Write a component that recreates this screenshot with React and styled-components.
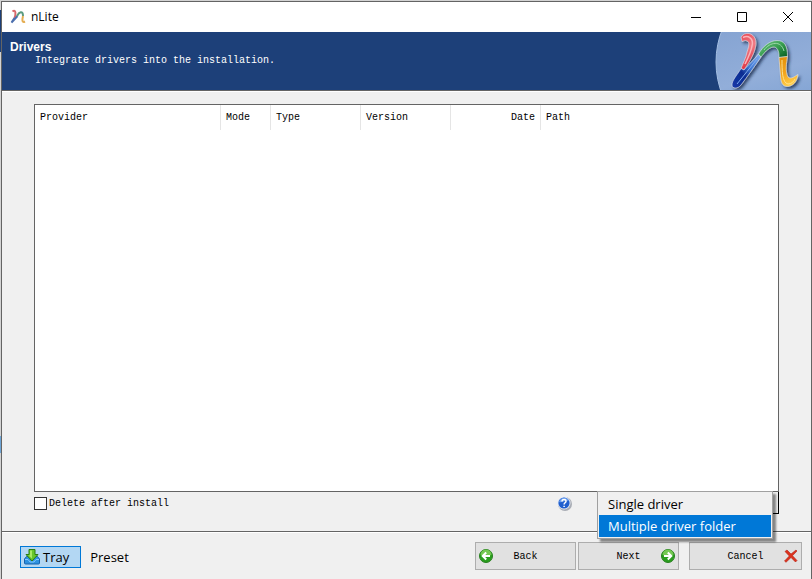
import React from 'react'
import styled, { createGlobalStyle } from 'styled-components'

const GlobalStyle = createGlobalStyle`
    * {
        box-sizing: border-box;
    }
    body {
        margin: 0;
        background: #d3d3d3;
    }
    button, input {
        margin: 0;
        font: inherit;
        color: inherit;
    }
`

const mono = '"Liberation Mono", monospace'
const sans = '"Open Sans", "Noto Sans", sans-serif'

const Desktop = styled.div`
    display: flex;
    min-height: 100vh;
    padding: 1px 0 0 1px;
    background: linear-gradient(#d3d3d3 10px, #1c3f78 10px 52px, #d3d3d3 52px 436px, #6ea5d6 436px 453px, #d3d3d3 453px);
`

const Window = styled.div`
    flex: 1;
    display: flex;
    flex-direction: column;
    min-width: 0;
    border: 1px solid #646464;
    border-bottom: 0;
    background: #f0f0f0;
    color: #000;
    font: 10px/14px ${mono};
`

const TitleBar = styled.header`
    display: flex;
    align-items: center;
    height: 30px;
    padding-left: 8px;
    background: #fff;
    font: 12px/16px ${sans};
`

const Title = styled.span`
    flex: 1;
    padding-left: 5px;
`

const CaptionButton = styled.button`
    display: grid;
    place-items: center;
    width: 46px;
    height: 30px;
    padding: 0;
    border: 0;
    background: none;
`

const Banner = styled.section`
    display: flex;
    justify-content: space-between;
    height: 59px;
    border-bottom: 1px solid #646464;
    background: #1d4079;
    color: #fff;
`

const BannerText = styled.div`
    padding: 8px;
`

const Heading = styled.h1`
    margin: 0;
    font: bold 12px/14px "Liberation Sans", sans-serif;
`

const Subheading = styled.p`
    margin: 0;
    padding-left: 25px;
`

const Main = styled.main`
    flex: 1;
    display: flex;
    flex-direction: column;
    padding: 12px 32px 17px;
    border-top: 1px solid #fff;
    border-bottom: 1px solid #646464;
`

const ListBox = styled.div`
    flex: 1;
    border: 1px solid #646464;
    background: #fff;
`

const Table = styled.table`
    width: 100%;
    border-spacing: 0;
    table-layout: fixed;
`

const Column = styled.th`
    width: ${p => p.$width ? `${p.$width}px` : 'auto'};
    height: 25px;
    padding: 0 5px;
    border-right: ${p => p.$width ? '1px solid #e5e5e5' : '0'};
    font-weight: normal;
    text-align: ${p => p.$align || 'left'};
`

const OptionsRow = styled.div`
    display: flex;
    align-items: center;
    height: 22px;
`

const CheckLabel = styled.label`
    display: flex;
    align-items: center;
    gap: 2px;
    margin-right: auto;
    line-height: 16px;
    span {
        padding-top: 2px;
    }
`

const Checkbox = styled.input`
    appearance: none;
    width: 13px;
    height: 13px;
    border: 1px solid #333;
    background: #fff;
    &:checked {
        background: #0078d7;
    }
`

const HelpButton = styled.button`
    display: flex;
    margin-right: 25px;
    padding: 0;
    border: 0;
    background: none;
`

const InsertWrap = styled.div`
    position: relative;
    align-self: flex-start;
    width: 182px;
`

const InsertButton = styled.button`
    display: block;
    width: 100%;
    height: 22px;
    border: 1px solid #000;
    border-top: 0;
    background: #f0f0f0;
`

const Menu = styled.div`
    position: absolute;
    top: -1px;
    left: 0;
    right: 6px;
    padding: 1px;
    border: 1px solid #a0a0a0;
    background: #f0f0f0;
    box-shadow: 3px 3px 2px rgba(0, 0, 0, 0.45);
    font: 13px/22px ${sans};
`

const MenuItem = styled.button`
    display: block;
    width: 100%;
    height: 22px;
    padding: 0 9px;
    border: 0;
    background: ${p => p.$active ? '#0078d7' : 'transparent'};
    color: ${p => p.$active ? '#fff' : '#000'};
    text-align: left;
    white-space: nowrap;
`

const Footer = styled.footer`
    display: flex;
    align-items: center;
    padding: 9px 9px 9px 18px;
    border-top: 1px solid #fff;
`

const ToolButton = styled.button`
    display: flex;
    align-items: center;
    gap: 3px;
    height: 22px;
    margin-top: 2px;
    padding: 0 ${p => p.$pressed ? '11px 0 3px' : '8px'};
    border: 1px solid ${p => p.$pressed ? '#0078d7' : 'transparent'};
    background: ${p => p.$pressed ? '#b3d7f3' : 'none'};
    font: 13px/20px ${sans};
`

const Nav = styled.nav`
    display: flex;
    gap: 2px;
    margin-left: auto;
`

const NavButton = styled.button`
    display: grid;
    grid-template-columns: 16px 1fr 16px;
    align-items: center;
    width: ${p => p.$wide ? '113px' : '101px'};
    height: 28px;
    margin-left: ${p => p.$wide ? '8px' : '0'};
    padding: 0 2px;
    border: 1px solid #adadad;
    background: #e1e1e1;
    text-align: center;
    span {
        grid-column: 2;
        padding-top: 1px;
    }
`

const LogoShapes = () => (
    <g>
        <path fill="url(#red)" d="M27 9.5 L26 5 C28 2 31 1 34 1.5 C40 3 42 9 40.5 15 C39 23 33 32 29 38 L26 36.5 C28 31 31 26 32 20 C34 14 35 10 32 9 C30 8 29 9 27 9.5Z" />
        <path fill="url(#blue)" d="M26 36.5 L29 38 C34 32 39 28 43.5 22 L46 25 C40 34 32 45 26 53 C23 57 17 57 17 53 C17 48 23 42 26 36.5Z" />
        <path fill="url(#green)" d="M43.5 22 C48 14 55 8.5 62 8.5 C69 8.5 72.5 13 72.5 24.5 L64 25.5 C64.5 19 62 14.5 58 15 C53 16 49 21 46 25Z" />
        <path fill="url(#gold)" d="M64 25.5 L72.5 24.5 C71.5 31 70 39 73 45 C76 48 80 44 83 42.5 C82 50 78 54 72.5 54.5 C67 54.5 66 50 65.5 44Z" />
    </g>
)

const BannerLogo = () => (
    <svg width="96" height="58" viewBox="0 0 96 58" aria-hidden="true">
        <defs>
            <linearGradient id="disc" x1="0" y1="0" x2="0.3" y2="1">
                <stop offset="0" stopColor="#7999cb" />
                <stop offset="0.6" stopColor="#92aed9" />
                <stop offset="1" stopColor="#7099ce" />
            </linearGradient>
            <linearGradient id="red" x1="0" y1="0" x2="0.3" y2="1">
                <stop offset="0" stopColor="#e64552" />
                <stop offset="0.5" stopColor="#f07c85" />
                <stop offset="1" stopColor="#dd2d3c" />
            </linearGradient>
            <linearGradient id="blue" x1="1" y1="0" x2="0" y2="1">
                <stop offset="0" stopColor="#86b2f0" />
                <stop offset="0.4" stopColor="#3d75d0" />
                <stop offset="0.6" stopColor="#0d2c91" />
                <stop offset="1" stopColor="#1539a9" />
            </linearGradient>
            <linearGradient id="green" x1="0" y1="0" x2="1" y2="1">
                <stop offset="0" stopColor="#77c889" />
                <stop offset="0.5" stopColor="#399f50" />
                <stop offset="1" stopColor="#075b20" />
            </linearGradient>
            <linearGradient id="gold" x1="0" y1="0" x2="0.3" y2="1">
                <stop offset="0" stopColor="#e08d08" />
                <stop offset="0.6" stopColor="#f4a51c" />
                <stop offset="1" stopColor="#ffcb45" />
            </linearGradient>
            <filter id="shade" x="-20%" y="-20%" width="140%" height="140%">
                <feDropShadow dx="2" dy="2" stdDeviation="1.5" floodColor="#14294d" floodOpacity="0.8" />
            </filter>
        </defs>
        <circle cx="90" cy="30" r="89" fill="url(#disc)" stroke="#a4bee2" strokeWidth="1" />
        <g filter="url(#shade)" stroke="#dfe6f0" strokeWidth=".6" strokeLinejoin="round">
            <LogoShapes />
        </g>
        <path d="M28 5.5 C33 3 39 6 37 14 C36 20 33 26 30 32" fill="none" stroke="#fbb4b9" strokeWidth="1.5" />
        <path d="M22 52 C29 44 35 35 42 27" fill="none" stroke="#80acf0" strokeWidth="1" />
        <path d="M49 18 C55 10 66 8 69 19" fill="none" stroke="#9ed8a9" strokeWidth="1" />
        <path d="M67 28 C67 38 67 51 73 52 C77 52 79 49 80 47" fill="none" stroke="#ffe18a" strokeWidth="1" />
    </svg>
)

const AppIcon = () => (
    <svg width="16" height="16" viewBox="0 0 16 16" fill="none" strokeWidth="2" aria-hidden="true">
        <path d="M2.5 2.5 C6 0 6 5 4.5 9" stroke="#d96a6d" />
        <path d="M7.5 7 L1.5 13.5 L4.5 9" stroke="#4c6fae" />
        <path d="M7 7 C9 3 13 1 13 7" stroke="#5b9b80" />
        <path d="M13 7 C12 11 12 14 15 12.5" stroke="#e4ac50" />
    </svg>
)

const HelpIcon = () => (
    <svg width="15" height="15" viewBox="0 0 15 15" role="img" aria-label="Help">
        <circle cx="8" cy="8" r="7" fill="#a8acb4" />
        <circle cx="7" cy="7" r="6.5" fill="#e9edf5" />
        <circle cx="7" cy="7" r="5.6" fill="#205fce" />
        <path d="M2 6 C3 1 10 0 12 5 C8 4 5 7 2 6" fill="#689cec" />
        <path d="M5 5.5 C5 2.6 9.3 2.8 9 5.3 C8.8 6.8 7.1 6.7 7.1 8.5 M7.1 9.7 V11" fill="none" stroke="#fff" strokeWidth="1.5" />
    </svg>
)

const TrayIcon = () => (
    <svg width="16" height="16" viewBox="0 0 16 16" aria-hidden="true">
        <path d="M2.5 7.5 H13.5 L15.5 10 V14 Q15.5 15 14.5 15 H1.5 Q.5 15 .5 14 V10Z" fill="#2e91df" stroke="#1662ad" />
        <path d="M1 10.5 H4 L6 13 H10 L12 10.5 H15" fill="none" stroke="#83caff" />
        <path d="M5 .5 H11 V5.5 H14 L8 12 L2 5.5 H5Z" fill="#67c62b" stroke="#2b7c13" />
        <path d="M6 1.5 H8 V9.5 L4.5 6.5 H6Z" fill="#a9e965" />
    </svg>
)

const ArrowIcon = ({ back }) => (
    <svg width="16" height="16" viewBox="0 0 16 16" aria-hidden="true">
        <circle cx="8" cy="8" r="6.5" fill="#299d1d" stroke="#28801f" />
        <path d="M2.5 7 A5.5 5.5 0 0 1 13.5 7 Q8 9 2.5 7Z" fill="#74c852" />
        <path
            d="M4 8 H11 M7.8 4.5 L11.3 8 L7.8 11.5"
            transform={back ? 'rotate(180 8 8)' : undefined}
            fill="none"
            stroke="#fff"
            strokeWidth="2"
        />
    </svg>
)

const CancelIcon = () => (
    <svg width="16" height="16" viewBox="0 0 16 16" aria-hidden="true">
        <path d="M2 3.5 L4 2 L8 6 L13 2 L14 3 L9.5 7.7 L14 12.5 L12.5 14 L8 9.5 L3 14.3 L1.5 13 L6.3 8Z" fill="#dc321c" stroke="#b32217" strokeWidth=".6" />
    </svg>
)

const columns = [
    { name: 'Provider', width: 186 },
    { name: 'Mode', width: 50 },
    { name: 'Type', width: 90 },
    { name: 'Version', width: 90 },
    { name: 'Date', width: 90, align: 'right' },
    { name: 'Path' }
]

const captionIcons = [
    { name: 'Minimize', path: 'M0 5.5 H10' },
    { name: 'Maximize', path: 'M.5 .5 H9.5 V9.5 H.5Z' },
    { name: 'Close', path: 'M0 0 L10 10 M10 0 L0 10' }
]

const App = () => (
    <Desktop>
        <GlobalStyle />
        <Window>
            <TitleBar>
                <AppIcon />
                <Title>nLite</Title>
                {captionIcons.map(icon => (
                    <CaptionButton key={icon.name} aria-label={icon.name}>
                        <svg width="10" height="10" viewBox="0 0 10 10" fill="none" stroke="#000">
                            <path d={icon.path} />
                        </svg>
                    </CaptionButton>
                ))}
            </TitleBar>
            <Banner>
                <BannerText>
                    <Heading>Drivers</Heading>
                    <Subheading>Integrate drivers into the installation.</Subheading>
                </BannerText>
                <BannerLogo />
            </Banner>
            <Main>
                <ListBox>
                    <Table>
                        <thead>
                            <tr>
                                {columns.map(col => (
                                    <Column key={col.name} scope="col" $width={col.width} $align={col.align}>
                                        {col.name}
                                    </Column>
                                ))}
                            </tr>
                        </thead>
                    </Table>
                </ListBox>
                <OptionsRow>
                    <CheckLabel>
                        <Checkbox type="checkbox" />
                        <span>Delete after install</span>
                    </CheckLabel>
                    <HelpButton><HelpIcon /></HelpButton>
                    <InsertWrap>
                        <InsertButton aria-label="Insert" aria-haspopup="menu" />
                        <Menu role="menu">
                            <MenuItem role="menuitem">Single driver</MenuItem>
                            <MenuItem role="menuitem" $active>Multiple driver folder</MenuItem>
                        </Menu>
                    </InsertWrap>
                </OptionsRow>
            </Main>
            <Footer>
                <ToolButton $pressed><TrayIcon />Tray</ToolButton>
                <ToolButton>Preset</ToolButton>
                <Nav>
                    <NavButton><ArrowIcon back /><span>Back</span></NavButton>
                    <NavButton><span>Next</span><ArrowIcon /></NavButton>
                    <NavButton $wide><span>Cancel</span><CancelIcon /></NavButton>
                </Nav>
            </Footer>
        </Window>
    </Desktop>
)

export default App
